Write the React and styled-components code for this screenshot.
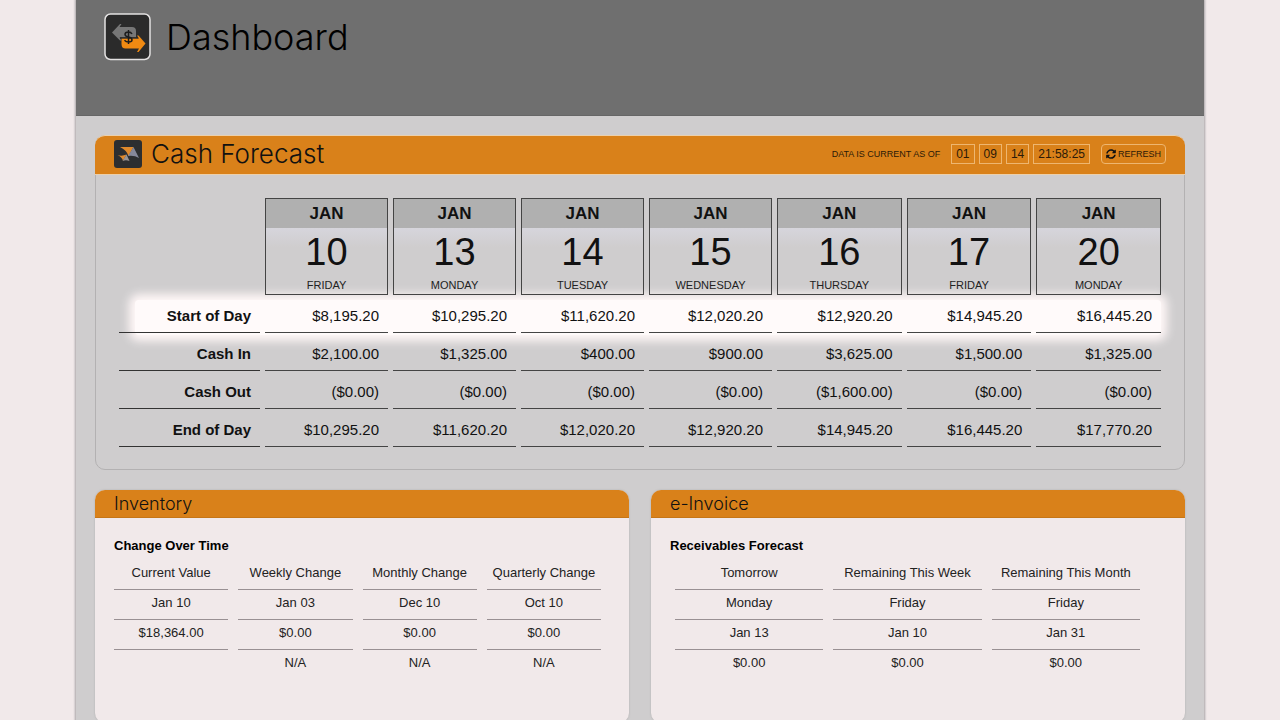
import React from "react";
import styled, { createGlobalStyle } from "styled-components";
import { FaSyncAlt } from "react-icons/fa";

const ink = "#111";
const orange = "#d9811a";
const light = 'Inter, "Liberation Sans", Arial, sans-serif';

const GlobalStyle = createGlobalStyle`
  * { box-sizing: border-box; }
  html { scrollbar-width: none; }
  body {
    margin: 0;
    background: #f1e9ea;
    color: ${ink};
    font-family: "Liberation Sans", Arial, sans-serif;
  }
  h1, h2, h3 { margin: 0; font-weight: 300; }
`;

const Page = styled.div`
  margin: 0 76px;
  min-height: 100vh;
  background: #cfcdce;
  box-shadow: 0 0 2px 1px #a9a5a7;
`;

const Masthead = styled.header`
  display: flex;
  align-items: flex-start;
  gap: 14px;
  height: 116px;
  padding: 13px 28px;
  background: #6f6f6f;
  border-bottom: 1px solid #666;
`;

const Title = styled.h1`
  color: #000;
  font: 300 36px/48px ${light};
`;

const Main = styled.main`
  display: flex;
  flex-direction: column;
  gap: 20px;
  padding: 19px 19px 20px;
`;

const ForecastPanel = styled.section`
  border: 1px solid #b3b1b2;
  border-radius: 10px;
  padding-bottom: 22px;
`;

const ForecastHeader = styled.header`
  display: flex;
  align-items: center;
  gap: 9px;
  height: 40px;
  margin: -1px -1px 0;
  padding: 0 19px 2px;
  background: ${orange};
  border: 1px solid #ecd0ac;
  border-width: 1px 0;
  border-radius: 10px 10px 0 0;
`;

const ForecastTitle = styled.h2`
  flex: 1;
  font: 300 26px/36px ${light};
`;

const Status = styled.div`
  display: flex;
  align-items: center;
  gap: 11px;
  color: #2b1a08;
`;

const StatusLabel = styled.span`
  font-size: 9px;
`;

const Stamp = styled.time`
  display: flex;
  gap: 4px;
`;

const StampPart = styled.span`
  padding: 0 4px;
  border: 1px solid #eeb670;
  font-size: 12px;
  line-height: 18px;
`;

const RefreshButton = styled.button`
  display: flex;
  align-items: center;
  gap: 2px;
  height: 20px;
  padding: 0 4px;
  border: 1px solid #eeb670;
  border-radius: 4px;
  background: transparent;
  color: #2b1a08;
  font: 9px "Liberation Sans", Arial, sans-serif;
  cursor: pointer;
  svg { color: #111; }
`;

const ForecastTable = styled.table`
  isolation: isolate;
  table-layout: fixed;
  width: calc(100% - 36px);
  margin: 23px 18px 0;
  border-collapse: separate;
  border-spacing: 5px 0;
`;

const LabelColumn = styled.col`
  width: 141px;
`;

const DayColumn = styled.col`
  width: ${(p) => (p.$narrow ? "123px" : "auto")};
`;

const DayHead = styled.th`
  padding: 0;
  border: 1px solid #444;
  font-weight: 400;
  text-align: center;
`;

const Month = styled.div`
  background: #b0b0b0;
  font-size: 17px;
  font-weight: 700;
  line-height: 29px;
`;

const DayNumber = styled.div`
  background: linear-gradient(#d6d5dc, #cfcdce00 40%);
  font-size: 38px;
  line-height: 48px;
`;

const Weekday = styled.div`
  color: #222;
  font-size: 11px;
  line-height: 18px;
`;

const ForecastRow = styled.tr`
  position: relative;
  height: 38px;
`;

const RowLabel = styled.th`
  padding: 3px 9px 0;
  border-bottom: 1px solid #333;
  font-size: 15px;
  text-align: right;
  ${(p) => p.$current && `
    &::before {
      content: "";
      position: absolute;
      z-index: -1;
      inset: 5px 0 -2px 16px;
      border-radius: 4px;
      background: #fffafa;
      box-shadow: 0 0 10px 6px #fff7f7;
    }
  `}
`;

const Amount = styled.td`
  padding: 3px 9px 0;
  border-bottom: 1px solid #444;
  font-size: 15px;
  text-align: right;
`;

const Cards = styled.div`
  display: grid;
  grid-template-columns: 1fr 1fr;
  gap: 22px;
`;

const Card = styled.section`
  height: 233px;
  overflow: hidden;
  border-radius: 10px;
  background: #f1e9ea;
  box-shadow: 0 0 2px #aaa;
`;

const CardTitle = styled.h2`
  height: 28px;
  padding: 0 19px;
  background: ${orange};
  border-bottom: 1px solid #c67617;
  font: 300 18px/28px ${light};
`;

const CardSubtitle = styled.h3`
  padding: 18px 19px 4px;
  color: #000;
  font-size: 13px;
  font-weight: 700;
  line-height: 20px;
`;

const SummaryTable = styled.table`
  table-layout: fixed;
  width: calc(100% - ${(p) => p.$indent + p.$outdent}px);
  margin: 0 ${(p) => p.$outdent}px 0 ${(p) => p.$indent}px;
  border-collapse: separate;
  border-spacing: 10px 0;
  th, td {
    height: 30px;
    padding: 0 0 4px;
    border-bottom: 1px solid #999093;
    color: #222;
    font-size: 13px;
    font-weight: 400;
    text-align: center;
    white-space: nowrap;
  }
  tr:last-child td { border-bottom-color: transparent; }
`;

const days = [
  ["10", "FRIDAY"], ["13", "MONDAY"], ["14", "TUESDAY"], ["15", "WEDNESDAY"],
  ["16", "THURSDAY"], ["17", "FRIDAY"], ["20", "MONDAY"],
];

const rows = [
  ["Start of Day", "$8,195.20", "$10,295.20", "$11,620.20", "$12,020.20", "$12,920.20", "$14,945.20", "$16,445.20"],
  ["Cash In", "$2,100.00", "$1,325.00", "$400.00", "$900.00", "$3,625.00", "$1,500.00", "$1,325.00"],
  ["Cash Out", "($0.00)", "($0.00)", "($0.00)", "($0.00)", "($1,600.00)", "($0.00)", "($0.00)"],
  ["End of Day", "$10,295.20", "$11,620.20", "$12,020.20", "$12,920.20", "$14,945.20", "$16,445.20", "$17,770.20"],
];

const inventory = {
  heads: ["Current Value", "Weekly Change", "Monthly Change", "Quarterly Change"],
  rows: [
    ["Jan 10", "Jan 03", "Dec 10", "Oct 10"],
    ["$18,364.00", "$0.00", "$0.00", "$0.00"],
    ["", "N/A", "N/A", "N/A"],
  ],
};

const receivables = {
  heads: ["Tomorrow", "Remaining This Week", "Remaining This Month"],
  rows: [
    ["Monday", "Friday", "Friday"],
    ["Jan 13", "Jan 10", "Jan 31"],
    ["$0.00", "$0.00", "$0.00"],
  ],
};

function ExchangeLogo() {
  return (
    <svg width="48" height="48" viewBox="0 0 48 48" aria-hidden="true">
      <rect x="1" y="1" width="45" height="45.500" rx="5.500" fill="#2b2b2b" stroke="#e4e2e2" strokeWidth="1.500" />
      <path d="M8 19.500 L16 11 H17.500 L15.500 14 H28 Q32 14 32 18 V24.500 H15.500 L17.500 27.500 H16 Z" fill="#777" />
      <path d="M41.500 30.500 L34.500 22.500 H33 L35 25.500 H17.500 V31 Q17.500 35.500 21.500 35.500 H35 L33 39 H34.500 Z" fill="#f08a12" />
      <path d="M16 24.800 H34" stroke="#2b2b2b" strokeWidth="1.200" />
      <path
        d="M24.500 17 V31 M28 21 Q27 19 24.500 19 Q21 19 21 21.300 Q21 23.500 24.500 24 Q28 24.500 28 27 Q28 29 24.500 29 Q22 29 20.500 27.200"
        fill="none" stroke="#1c1c1c" strokeWidth="1.500"
      />
    </svg>
  );
}

function ForecastLogo() {
  return (
    <svg width="28" height="28" viewBox="0 0 28 28" aria-hidden="true">
      <rect width="28" height="28" rx="3" fill="#2c2e30" />
      <path d="M6 7 H19.500 L14.500 16 Q12.500 10 6 7 Z" fill="#e08a2c" />
      <path d="M19.500 7 L25 18 Q20 15 14 16 Z" fill="#85889a" />
      <path d="M3.500 15 Q8 16.500 12.500 14.500 L9 20.500 Q7.500 16.500 3.500 15 Z" fill="#e08a2c" />
      <path d="M12.500 14.500 L15.500 21 Q12 19.500 8.500 21 Z" fill="#9a9494" />
    </svg>
  );
}

function Summary({ data, indent, outdent, label }) {
  return (
    <SummaryTable $indent={indent} $outdent={outdent} aria-label={label}>
      <thead>
        <tr>{data.heads.map((h) => <th key={h} scope="col">{h}</th>)}</tr>
      </thead>
      <tbody>
        {data.rows.map((row, i) => (
          <tr key={i}>{row.map((cell, j) => <td key={j}>{cell}</td>)}</tr>
        ))}
      </tbody>
    </SummaryTable>
  );
}

export default function App() {
  return (
    <>
      <GlobalStyle />
      <Page>
        <Masthead>
          <ExchangeLogo />
          <Title>Dashboard</Title>
        </Masthead>
        <Main>
          <ForecastPanel>
            <ForecastHeader>
              <ForecastLogo />
              <ForecastTitle>Cash Forecast</ForecastTitle>
              <Status>
                <StatusLabel>DATA IS CURRENT AS OF</StatusLabel>
                <Stamp dateTime="2014-01-09T21:58:25">
                  {["01", "09", "14", "21:58:25"].map((part) => (
                    <StampPart key={part}>{part}</StampPart>
                  ))}
                </Stamp>
                <RefreshButton type="button">
                  <FaSyncAlt size={10} />
                  REFRESH
                </RefreshButton>
              </Status>
            </ForecastHeader>
            <ForecastTable aria-label="Cash Forecast">
              <colgroup>
                <LabelColumn />
                {days.map(([n], i) => <DayColumn key={n} $narrow={i < 4} />)}
              </colgroup>
              <thead>
                <tr>
                  <td />
                  {days.map(([n, weekday]) => (
                    <DayHead key={n} scope="col">
                      <Month>JAN</Month>
                      <DayNumber>{n}</DayNumber>
                      <Weekday>{weekday}</Weekday>
                    </DayHead>
                  ))}
                </tr>
              </thead>
              <tbody>
                {rows.map(([label, ...amounts], i) => (
                  <ForecastRow key={label}>
                    <RowLabel scope="row" $current={i === 0}>{label}</RowLabel>
                    {amounts.map((a, j) => <Amount key={j}>{a}</Amount>)}
                  </ForecastRow>
                ))}
              </tbody>
            </ForecastTable>
          </ForecastPanel>
          <Cards>
            <Card>
              <CardTitle>Inventory</CardTitle>
              <CardSubtitle>Change Over Time</CardSubtitle>
              <Summary data={inventory} indent={9} outdent={18} label="Change Over Time" />
            </Card>
            <Card>
              <CardTitle>e-Invoice</CardTitle>
              <CardSubtitle>Receivables Forecast</CardSubtitle>
              <Summary data={receivables} indent={14} outdent={35} label="Receivables Forecast" />
            </Card>
          </Cards>
        </Main>
      </Page>
    </>
  );
}
